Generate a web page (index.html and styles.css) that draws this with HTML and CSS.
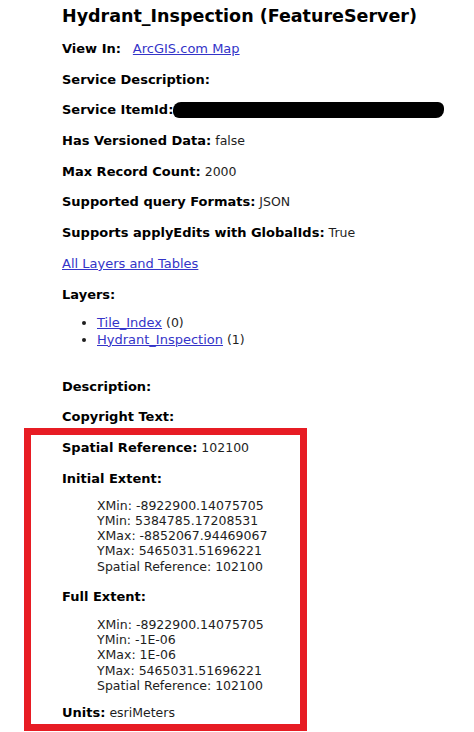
FILE: index.html
```html
<!DOCTYPE html>
<html lang="en">
<head>
    <meta charset="UTF-8">
    <title>Hydrant_Inspection (FeatureServer)</title>
    <link rel="stylesheet" href="styles.css">
</head>
<body>
    <div class="page">
        <h2 class="title">Hydrant_Inspection (FeatureServer)</h2>
        <p><b>View In:</b>&nbsp;&nbsp; <a href="#">ArcGIS.com Map</a></p>
        <p><b>Service Description:</b></p>
        <p><b>Service ItemId:</b><span class="redacted"></span></p>
        <p><b>Has Versioned Data:</b> false</p>
        <p><b>Max Record Count:</b> 2000</p>
        <p><b>Supported query Formats:</b> JSON</p>
        <p><b>Supports applyEdits with GlobalIds:</b> True</p>
        <p><a href="#">All Layers and Tables</a></p>
        <p class="label"><b>Layers:</b></p>
        <ul class="layers">
            <li><a href="#">Tile_Index</a> (0)</li>
            <li><a href="#">Hydrant_Inspection</a> (1)</li>
        </ul>
        <p><b>Description:</b></p>
        <p class="before-box"><b>Copyright Text:</b></p>
        <div class="highlight">
            <p><b>Spatial Reference:</b> 102100</p>
            <p class="label"><b>Initial Extent:</b></p>
            <ul class="extent">
                <li>XMin: -8922900.14075705</li>
                <li>YMin: 5384785.17208531</li>
                <li>XMax: -8852067.94469067</li>
                <li>YMax: 5465031.51696221</li>
                <li>Spatial Reference: 102100</li>
            </ul>
            <p class="label full"><b>Full Extent:</b></p>
            <ul class="extent">
                <li>XMin: -8922900.14075705</li>
                <li>YMin: -1E-06</li>
                <li>XMax: 1E-06</li>
                <li>YMax: 5465031.51696221</li>
                <li>Spatial Reference: 102100</li>
            </ul>
            <p class="last"><b>Units:</b> esriMeters</p>
        </div>
    </div>
</body>
</html>
```

FILE: styles.css
```css
body {
    margin: 0;
    font-family: "DejaVu Sans", Verdana, sans-serif;
    font-size: 12.5px;
    color: #1e1e1e;
    background: #fff;
}
.page {
    padding: 5px 0 0 62px;
}
.title {
    font-size: 17.5px;
    line-height: 22px;
    margin: 0 0 14px;
    color: #000;
}
p {
    margin: 0 0 15.7px;
    height: 15px;
    line-height: 15px;
}
b {
    font-size: 13px;
    line-height: 15px;
    color: #000;
}
a {
    font-size: 13px;
    line-height: 15px;
    color: #3434c8;
}
.redacted {
    display: inline-block;
    width: 271px;
    height: 16px;
    background: #000;
    border-radius: 8px 6px 8px 6px;
    vertical-align: -4px;
}
.label {
    margin-bottom: 12px;
}
.label.full {
    margin-bottom: 13px;
}
.layers {
    margin: 0 0 31px;
    padding-left: 35px;
    line-height: 17px;
}
.before-box {
    margin-bottom: 4px;
}
.highlight {
    margin-left: -38px;
    width: 238px;
    border: 7px solid #e71c24;
    padding: 5px 0 0 31px;
}
.extent {
    list-style: none;
    margin: 0 0 15px;
    padding-left: 35px;
    line-height: 15.2px;
}
.extent:last-of-type {
    margin-bottom: 12px;
}
.last {
    margin-bottom: 4px;
}
```
